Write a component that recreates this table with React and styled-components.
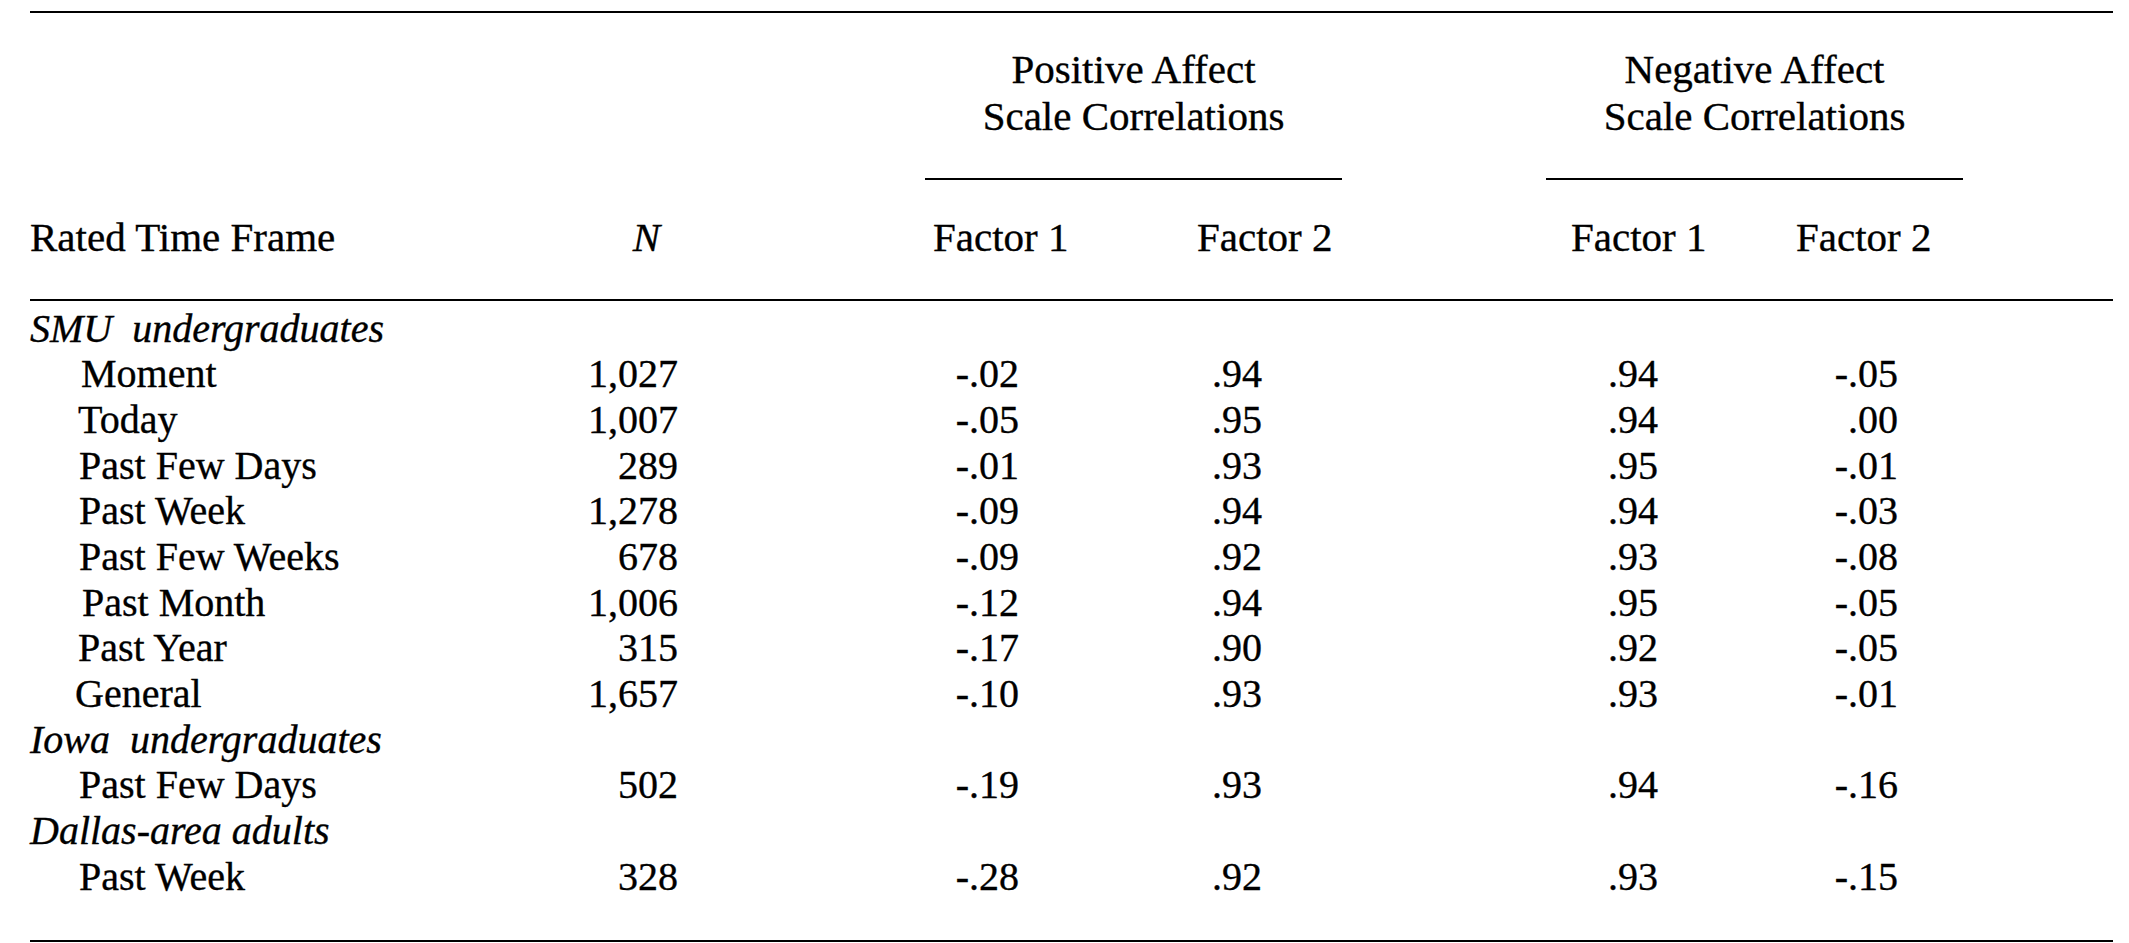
import React from "react";
import styled, { createGlobalStyle } from "styled-components";

const GlobalStyle = createGlobalStyle`
  html, body {
    margin: 0;
    padding: 0;
    background: #ffffff;
  }
  body {
    font-family: "Liberation Serif", "Times New Roman", serif;
    color: #000000;
    -webkit-text-stroke: 0.35px #000000;
  }
`;

// label | N | spacer | PA F1 | PA F2 | spacer | NA F1 | NA F2 | rest
const COLUMNS = "530px 140px 225px 208px 209px 204px 208px 209px 150px";

const Table = styled.div`
  margin: 11px 0 0 30px;
  width: 2083px;
  border-top: 2px solid #000000;
  border-bottom: 2px solid #000000;
`;

const HeaderGrid = styled.div`
  display: grid;
  grid-template-columns: ${COLUMNS};
  border-bottom: 2px solid #000000;
  font-size: 41px;
  line-height: 47px;
`;

const GroupTitle = styled.div`
  grid-row: 1;
  grid-column: ${(p) => p.$col} / span 2;
  text-align: center;
  padding: 33px 0 38px;
  border-bottom: 2px solid #000000;
`;

const HeadCell = styled.div`
  grid-row: 2;
  grid-column: ${(p) => p.$col};
  padding: 34px ${(p) => p.$right || 0}px 38px ${(p) => p.$left || 0}px;
  text-align: ${(p) => p.$align || "left"};
  font-style: ${(p) => (p.$italic ? "italic" : "normal")};
  white-space: nowrap;
`;

const Body = styled.div`
  padding: 4.7px 0 40.6px;
  font-size: 40px;
  line-height: 45.67px;
`;

const Row = styled.div`
  display: grid;
  grid-template-columns: ${COLUMNS};
  height: 45.67px;
`;

const Label = styled.div`
  grid-column: ${(p) => (p.$group ? "1 / span 3" : "1")};
  padding-left: ${(p) => p.$indent || 0}px;
  font-style: ${(p) => (p.$group ? "italic" : "normal")};
  white-space: pre;
`;

const Num = styled.div`
  grid-column: ${(p) => p.$col};
  text-align: right;
  padding-right: ${(p) => p.$right}px;
  white-space: nowrap;
`;

// right padding that puts each value column where it sits on the page
const valueCols = [
  { col: 2, right: 22 },
  { col: 4, right: 114 },
  { col: 5, right: 80 },
  { col: 7, right: 96 },
  { col: 8, right: 65 },
];

const groups = [
  {
    name: "SMU  undergraduates",
    rows: [
      { label: "Moment", indent: 51, v: ["1,027", "-.02", ".94", ".94", "-.05"] },
      { label: "Today", indent: 48, v: ["1,007", "-.05", ".95", ".94", ".00"] },
      { label: "Past Few Days", indent: 49, v: ["289", "-.01", ".93", ".95", "-.01"] },
      { label: "Past Week", indent: 49, v: ["1,278", "-.09", ".94", ".94", "-.03"] },
      { label: "Past Few Weeks", indent: 49, v: ["678", "-.09", ".92", ".93", "-.08"] },
      { label: "Past Month", indent: 52, v: ["1,006", "-.12", ".94", ".95", "-.05"] },
      { label: "Past Year", indent: 48, v: ["315", "-.17", ".90", ".92", "-.05"] },
      { label: "General", indent: 45, v: ["1,657", "-.10", ".93", ".93", "-.01"] },
    ],
  },
  {
    name: "Iowa  undergraduates",
    rows: [
      { label: "Past Few Days", indent: 49, v: ["502", "-.19", ".93", ".94", "-.16"] },
    ],
  },
  {
    name: "Dallas-area adults",
    rows: [
      { label: "Past Week", indent: 49, v: ["328", "-.28", ".92", ".93", "-.15"] },
    ],
  },
];

const App = () => {
  return (
    <>
      <GlobalStyle />
      <Table>
        <HeaderGrid>
          <GroupTitle $col={4}>
            Positive Affect
            <br />
            Scale Correlations
          </GroupTitle>
          <GroupTitle $col={7}>
            Negative Affect
            <br />
            Scale Correlations
          </GroupTitle>
          <HeadCell $col={1}>Rated Time Frame</HeadCell>
          <HeadCell $col={2} $align="right" $right={40} $italic>
            N
          </HeadCell>
          <HeadCell $col={4} $left={8}>Factor 1</HeadCell>
          <HeadCell $col={5} $left={64}>Factor 2</HeadCell>
          <HeadCell $col={7} $left={25}>Factor 1</HeadCell>
          <HeadCell $col={8} $left={42}>Factor 2</HeadCell>
        </HeaderGrid>
        <Body>
          {groups.map((g) => (
            <React.Fragment key={g.name}>
              <Row>
                <Label $group>{g.name}</Label>
              </Row>
              {g.rows.map((r, i) => (
                <Row key={i}>
                  <Label $indent={r.indent}>{r.label}</Label>
                  {r.v.map((val, j) => (
                    <Num key={j} $col={valueCols[j].col} $right={valueCols[j].right}>
                      {val}
                    </Num>
                  ))}
                </Row>
              ))}
            </React.Fragment>
          ))}
        </Body>
      </Table>
    </>
  );
};

export default App;
